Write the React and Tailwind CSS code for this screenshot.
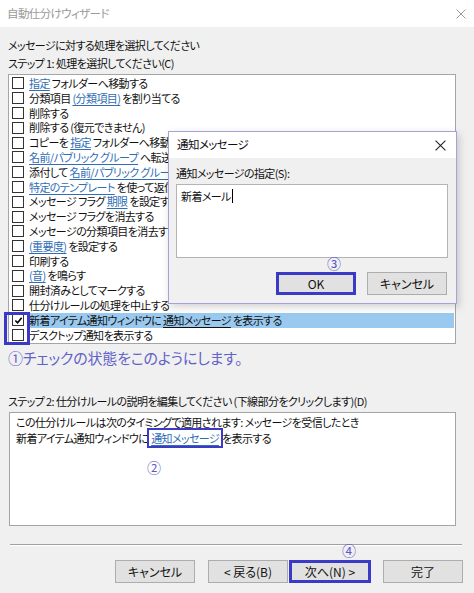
import React from "react";

const rows = [
  [{ link: "指定" }, " フォルダーへ移動する"],
  ["分類項目 ", { link: "(分類項目)" }, " を割り当てる"],
  ["削除する"],
  ["削除する (復元できません)"],
  ["コピーを ", { link: "指定" }, " フォルダーへ移動する"],
  [{ link: "名前/パブリック グループ" }, " へ転送する"],
  ["添付して ", { link: "名前/パブリック グループ" }, " へ転送する"],
  [{ link: "特定のテンプレート" }, " を使って返信する"],
  ["メッセージ フラグ ", { link: "期限" }, " を設定する"],
  ["メッセージ フラグを消去する"],
  ["メッセージの分類項目を消去する"],
  [{ link: "(重要度)" }, " を設定する"],
  ["印刷する"],
  [{ link: "(音)" }, " を鳴らす"],
  ["開封済みとしてマークする"],
  ["仕分けルールの処理を中止する"],
  ["新着アイテム通知ウィンドウに ", { link: "通知メッセージ" }, " を表示する"],
  ["デスクトップ通知を表示する"],
];

const CloseIcon = ({ className }) => (
  <svg viewBox="0 0 10 10" className={className} fill="none" stroke="currentColor" strokeWidth="1">
    <path d="M0.5 0.5 L9.5 9.5 M9.5 0.5 L0.5 9.5" />
  </svg>
);

const RuleRow = ({ parts, checked, selected }) => (
  <div className="flex items-center h-[14.8px]">
    <span className="ml-[3px] w-[12px] h-[12px] border border-[#333333] bg-white shrink-0 flex items-center justify-center">
      {checked && (
        <svg viewBox="0 0 10 10" className="w-[9px] h-[9px]" fill="none" stroke="#000" strokeWidth="1.8">
          <path d="M1.5 5 L4 7.5 L8.5 2" />
        </svg>
      )}
    </span>
    <span
      className={
        selected
          ? "ml-[4px] pl-[1px] flex-1 mr-[1px] bg-[#99c9ef] leading-[14.8px] whitespace-nowrap"
          : "ml-[4px] pl-[1px] leading-[14.8px] whitespace-nowrap"
      }
    >
      {parts.map((p, i) =>
        typeof p === "string" ? (
          <span key={i} className="whitespace-pre">{p}</span>
        ) : (
          <span
            key={i}
            className={
              selected
                ? "underline underline-offset-[2px] decoration-1"
                : "text-[#2f6db5] underline underline-offset-[2px] decoration-1"
            }
          >
            {p.link}
          </span>
        )
      )}
    </span>
  </div>
);

const Button = ({ children, className = "" }) => (
  <div
    className={`h-[23px] flex items-center justify-center bg-[#e1e1e1] border border-[#adadad] text-[12px] ${className}`}
  >
    {children}
  </div>
);

export default function App() {
  return (
    <div className="relative w-[474px] h-[593px] overflow-hidden bg-[#f0f0f0] text-[#111] font-['Noto_Sans_CJK_JP','Noto_Sans',sans-serif] [font-feature-settings:'palt'] text-[11px] tracking-[-0.6px]">
      {/* title bar */}
      <div className="h-[27px] bg-white flex items-center justify-between pl-[7px] pr-[8px] text-[#9a9a9a] text-[11.5px]">
        <span>自動仕分けウィザード</span>
        <CloseIcon className="w-[10px] h-[10px] text-[#9a9a9a]" />
      </div>

      {/* body */}
      <div className="pl-[8px] pt-[9px]">
        <div className="leading-[18px]">メッセージに対する処理を選択してください</div>
        <div className="leading-[18px]">ステップ 1: 処理を選択してください(C)</div>

        <div className="mt-[2px] w-[448px] bg-white border border-[#a5a5a5] py-[1px]">
          {rows.map((parts, i) => (
            <RuleRow key={i} parts={parts} checked={i === 16} selected={i === 16} />
          ))}
        </div>

        <div className="mt-[4px] leading-[20px] text-[15px] tracking-[-0.2px] text-[#6262c8]">
          ①チェックの状態をこのようにします。
        </div>

        <div className="mt-[24px] leading-[18px]">
          ステップ 2: 仕分けルールの説明を編集してください (下線部分をクリックします)(D)
        </div>
        <div className="mt-[2px] ml-[1px] w-[447px] h-[114px] bg-white border border-[#a5a5a5] pl-[6px] pt-[1px]">
          <div className="leading-[16px]">
            この仕分けルールは次のタイミングで適用されます: メッセージを受信したとき
          </div>
          <div className="leading-[16px] whitespace-nowrap">
            新着アイテム通知ウィンドウに
            <span className="relative">
              <span className="text-[#2f6db5] underline underline-offset-[2px] decoration-1 px-[3px]">通知メッセージ</span>
              <span className="absolute -left-[1px] -right-[1px] -top-[2px] -bottom-[2px] border-2 border-[#3a3ac6]" />
            </span>
            を表示する
          </div>
        </div>

        <div className="mt-[18px] ml-[2px] w-[452px] border-t border-[#a0a0a0] border-b border-b-white" />

        <div className="mt-[14px] flex items-center tracking-normal">
          <Button className="ml-[107px] w-[80px]">キャンセル</Button>
          <Button className="ml-[13px] w-[80px]">&lt; 戻る(B)</Button>
          <div className="ml-[1px] w-[82px] h-[23px] flex items-center justify-center bg-[#e1e1e1] border-[3px] border-[#3a3ac6] text-[12px]">
            次へ(N) &gt;
          </div>
          <Button className="ml-[12px] w-[80px]">完了</Button>
        </div>
      </div>

      {/* annotation: checkbox frame */}
      <div className="absolute left-[4px] top-[312px] w-[26px] h-[33px] border-[3px] border-[#3a3ac6]" />

      {/* circled numbers */}
      <div className="absolute left-[147px] top-[458px] text-[14px] leading-[18px] text-[#5a5acc]">②</div>
      <div className="absolute left-[342px] top-[541px] text-[14px] leading-[18px] text-[#5a5acc]">④</div>

      {/* notification message dialog */}
      <div className="absolute left-[168px] top-[131px] w-[289px] h-[173px] border border-[#a6a2d8] bg-[#f0f0f0] flex flex-col shadow-[2px_3px_8px_rgba(0,0,0,0.18)]">
        <div className="h-[26px] bg-white flex items-center justify-between pl-[8px] pr-[10px] text-[11.5px]">
          <span>通知メッセージ</span>
          <CloseIcon className="w-[11px] h-[11px] text-[#222]" />
        </div>
        <div className="pl-[7px] pt-[6px]">
          <div className="leading-[18px]">通知メッセージの指定(S):</div>
          <div className="mt-[2px] w-[272px] h-[74px] bg-white border border-[#b4b4b4] pl-[4px] pt-[3px] leading-[16px] flex items-start">
            <span>新着メール</span>
            <span className="ml-[1px] mt-[1px] w-[1px] h-[14px] bg-black" />
          </div>
          <div className="relative mt-[14px] w-[272px] flex justify-end tracking-normal">
            <div className="w-[80px] h-[23px] flex items-center justify-center bg-[#e1e1e1] border-[3px] border-[#3a3ac6] text-[12px]">
              OK
            </div>
            <Button className="ml-[11px] mr-[1px] w-[80px]">キャンセル</Button>
            <div className="absolute left-[151px] -top-[18px] text-[14px] leading-[18px] text-[#5a5acc]">③</div>
          </div>
        </div>
      </div>
    </div>
  );
}
